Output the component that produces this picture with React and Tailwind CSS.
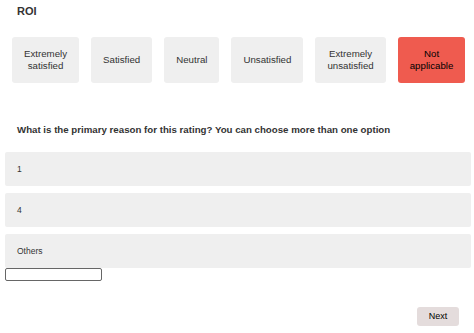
import { useState } from "react";

const ratings = [
  { label: ["Extremely", "satisfied"] },
  { label: ["Satisfied"] },
  { label: ["Neutral"] },
  { label: ["Unsatisfied"] },
  { label: ["Extremely", "unsatisfied"] },
  { label: ["Not", "applicable"] },
];

const reasons = ["1", "4", "Others"];

export default function App() {
  const [selected, setSelected] = useState(5);
  const [picked, setPicked] = useState([]);
  const [other, setOther] = useState("");

  const toggle = (reason) =>
    setPicked((list) => (list.includes(reason) ? list.filter((item) => item !== reason) : [...list, reason]));

  return (
    <main className="h-[333px] w-[474px] overflow-hidden bg-white font-['Liberation_Sans',Arial,sans-serif] text-[#333]">
      <h1 className="pl-[17px] pt-[5px] text-[11px] font-bold leading-[13px] text-[#333]">ROI</h1>

      <div className="mt-[19px] flex gap-[12px] pl-[12px]">
        {ratings.map((rating, index) => (
          <button
            key={rating.label.join(" ")}
            onClick={() => setSelected(index)}
            className={`flex h-[46px] flex-col items-center justify-center rounded-[3px] px-[12px] text-[9.7px] leading-[12px] ${
              selected === index ? "bg-[#ef5b4f] text-black" : "bg-[#efefef] text-[#333]"
            }`}
          >
            {rating.label.map((line) => (
              <span key={line}>{line}</span>
            ))}
          </button>
        ))}
      </div>

      <p className="mt-[40px] pl-[17px] text-[9.7px] font-bold leading-[14px] text-[#333]">
        What is the primary reason for this rating? You can choose more than one option
      </p>

      <div className="mx-[5px] mt-[15px] flex w-[466px] flex-col gap-[7px]">
        {reasons.map((reason) => (
          <button
            key={reason}
            onClick={() => toggle(reason)}
            className={`flex h-[34px] items-center rounded-[2px] pl-[12px] text-left text-[8.5px] text-[#333] ${
              picked.includes(reason) ? "bg-[#e2e2e2]" : "bg-[#efefef]"
            }`}
          >
            {reason}
          </button>
        ))}
      </div>
      <input
        value={other}
        onChange={(event) => setOther(event.target.value)}
        className="mx-[5px] block h-[13px] w-[97px] rounded-[2px] border border-[#666] bg-white text-[8px] focus:outline-none"
      />

      <div className="mt-[26px] flex justify-end pr-[15px]">
        <button className="h-[19px] w-[42px] rounded-[3px] bg-[#e4dcdc] text-[9px] text-black">Next</button>
      </div>
    </main>
  );
}
